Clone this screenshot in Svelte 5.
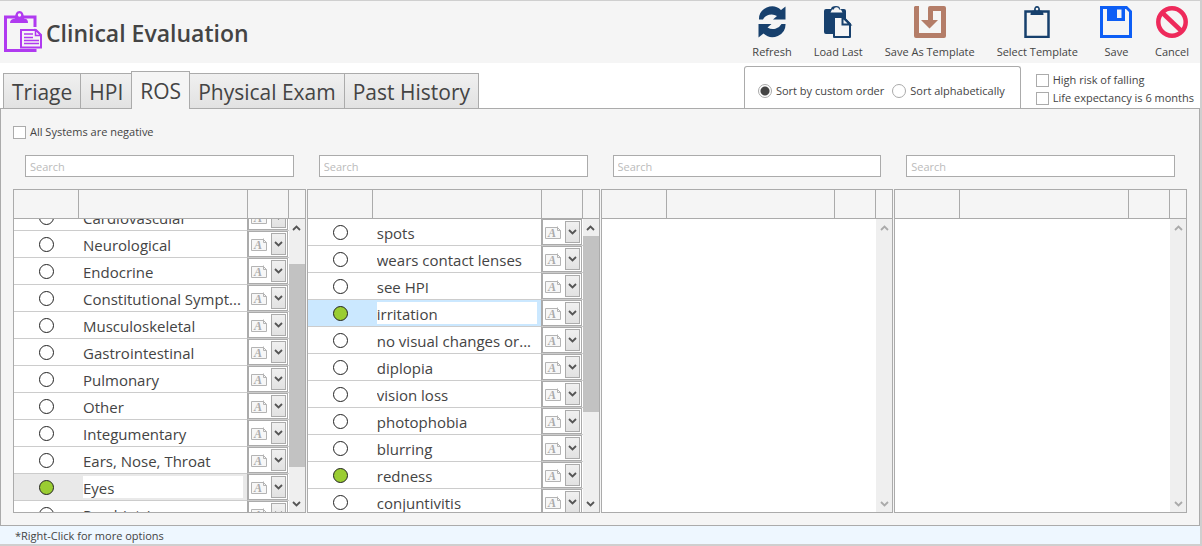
<script lang="ts">
	interface Row {
		name: string;
		checked?: boolean;
		selected?: boolean;
	}

	interface List {
		rows: Row[];
		// pixels scrolled past the top edge
		scroll: number;
		thumb?: { top: number; size: number };
		focused?: boolean;
	}

	const tools = [
		{ id: 'refresh', label: 'Refresh' },
		{ id: 'load', label: 'Load Last' },
		{ id: 'saveas', label: 'Save As Template' },
		{ id: 'select', label: 'Select Template' },
		{ id: 'save', label: 'Save' },
		{ id: 'cancel', label: 'Cancel' }
	];

	const tabs = ['Triage', 'HPI', 'ROS', 'Physical Exam', 'Past History'];

	let activeTab = $state('ROS');
	let sort = $state('custom');
	let allNegative = $state(false);
	let fallRisk = $state(false);
	let lifeExpectancy = $state(false);

	let lists: List[] = $state([
		{
			scroll: 15,
			thumb: { top: 11, size: 78 },
			rows: [
				{ name: 'Cardiovascular' },
				{ name: 'Neurological' },
				{ name: 'Endocrine' },
				{ name: 'Constitutional Sympt...' },
				{ name: 'Musculoskeletal' },
				{ name: 'Gastrointestinal' },
				{ name: 'Pulmonary' },
				{ name: 'Other' },
				{ name: 'Integumentary' },
				{ name: 'Ears, Nose, Throat' },
				{ name: 'Eyes', checked: true, selected: true },
				{ name: 'Psychiatric' }
			]
		},
		{
			scroll: 0,
			thumb: { top: 0, size: 68 },
			focused: true,
			rows: [
				{ name: 'spots' },
				{ name: 'wears contact lenses' },
				{ name: 'see HPI' },
				{ name: 'irritation', checked: true, selected: true },
				{ name: 'no visual changes or...' },
				{ name: 'diplopia' },
				{ name: 'vision loss' },
				{ name: 'photophobia' },
				{ name: 'blurring' },
				{ name: 'redness', checked: true },
				{ name: 'conjuntivitis' }
			]
		},
		{ scroll: 0, rows: [] },
		{ scroll: 0, rows: [] }
	]);
</script>

<div class="window">
	<header class="header">
		<svg class="logo" width="38" height="42" viewBox="0 0 38 42" fill="none">
			<path d="M31 16V6H1.5v33.500H31V38" stroke="#b03af0" stroke-width="3" />
			<path d="M6 12c0-3 2-4 5-4.500C11 3 12.500 0 15.500 0S20 3 20 7.500c3 .5 4 1.500 4 4.500z" fill="#b03af0" />
			<circle cx="15.500" cy="4" r="1.700" fill="#f5f5f5" />
			<path d="M17 19h15l5 5v12.500H17z" fill="#f5f5f5" stroke="#b03af0" stroke-width="2" />
			<path d="M31.500 19v5.500H37z" fill="#f5f5f5" stroke="#b03af0" stroke-width="1.500" />
			<path d="M20 23h9M20 26.500h9M20 29.500h15M20 32.500h15" stroke="#b03af0" stroke-width="1.700" />
		</svg>
		<h1>Clinical Evaluation</h1>

		<div class="toolbar">
			{#each tools as tool}
				<button class="tool">
					<svg width="32" height="32" viewBox="0 0 32 32" fill="none">
						{#if tool.id === 'refresh'}
							<path d="M3 13.500A13 12.500 0 0 1 25 4L29.500.5V13.500H17l4-3.500A9.500 8.500 0 0 0 7 13.500z" fill="#17406d" />
							<path d="M29.500 18A13 12.500 0 0 1 7.500 27.500L2.500 31.500V18H15.500l-4 3.500A9.500 8.500 0 0 0 25.500 18z" fill="#17406d" />
						{:else if tool.id === 'load'}
							<path d="M4 3h5c0-2 2-3 5-3s4 1 4 3h4a2 2 0 0 1 2 2v23H4a2 2 0 0 1-2-2V5a2 2 0 0 1 2-2z" fill="#17406d" />
							<path d="M8.500 6.500l1.500-3h2c0-3 5-3 5 0h2l1.500 3z" fill="#f5f5f5" />
							<path d="M12 11h9l7 7v13H12z" fill="#f5f5f5" stroke="#17406d" stroke-width="2" stroke-linejoin="round" />
							<path d="M20.500 11v7.500H28z" fill="#f5f5f5" stroke="#17406d" stroke-width="2" />
						{:else if tool.id === 'saveas'}
							<path d="M1 0h4v27h22V5h-8v9h5l-8.500 8.500L7 14h7V2a2 2 0 0 1 2-2h14a2 2 0 0 1 2 2v28a2 2 0 0 1-2 2H2a2 2 0 0 1-2-2V1z" fill="#b47d68" />
						{:else if tool.id === 'select'}
							<path d="M4.500 5.500h23V31h-23z" stroke="#17406d" stroke-width="2.500" />
							<path d="M9.500 9c0-3 1-4.500 3.500-4.500C13 1.500 14 0 16 0s3 1.500 3 4.500c2.500 0 3.500 1.500 3.500 4.500z" fill="#17406d" />
							<circle cx="16" cy="3" r="1.300" fill="#f5f5f5" />
						{:else if tool.id === 'save'}
							<path d="M0 0h27l5 5v27H0zM3 3v26h26V6l-3-3h-1v12H7V3z" fill="#0d5ef5" fill-rule="evenodd" />
							<path d="M7 2h18v13H7z" fill="#0d5ef5" />
							<path d="M17 3.500h4.500V12H17z" fill="#f5f5f5" />
						{:else}
							<circle cx="16" cy="16" r="13.700" stroke="#ee2a5b" stroke-width="4.500" />
							<path d="M6 6.500l20 19" stroke="#ee2a5b" stroke-width="4.500" />
						{/if}
					</svg>
					<span>{tool.label}</span>
				</button>
			{/each}
		</div>
	</header>

	<div class="strip">
		<nav class="tabs">
			{#each tabs as tab}
				<button class="tab" class:active={tab === activeTab} onclick={() => { activeTab = tab; }}>{tab}</button>
			{/each}
		</nav>

		<div class="sort">
			<label><input type="radio" name="sort" value="custom" bind:group={sort} />Sort by custom order</label>
			<label><input type="radio" name="sort" value="alpha" bind:group={sort} />Sort alphabetically</label>
		</div>

		<div class="flags">
			<label><input type="checkbox" class="box" bind:checked={fallRisk} />High risk of falling</label>
			<label><input type="checkbox" class="box" bind:checked={lifeExpectancy} />Life expectancy is 6 months</label>
		</div>
	</div>

	<main class="panel">
		<label class="all"><input type="checkbox" class="box" bind:checked={allNegative} />All Systems are negative</label>

		<div class="lists">
			{#each lists as list}
				<section class="column">
					<input class="search" type="text" placeholder="Search" aria-label="Search" />
					<div class="list" class:focused={list.focused}>
						<table>
							<thead>
								<tr><th></th><th></th><th></th></tr>
							</thead>
							<tbody>
								{#each list.rows as row, i}
									<tr class:selected={row.selected} style:margin-top={i === 0 ? `${-list.scroll}px` : null}>
										<td class="mark"><input type="checkbox" aria-label={row.name} bind:checked={row.checked} /></td>
										<td class="name"><span>{row.name}</span></td>
										<td class="note">
											<button class="combo" aria-label="Note for {row.name}">
												<svg width="16" height="13" viewBox="0 0 16 13" fill="none">
													<path d="M.5 1.500h12l3 3v8H.5z" fill="#f7f7f7" stroke="#b4b4b4" />
													<path d="M12.500.5v4h3" stroke="#b4b4b4" />
													<text x="3" y="11">A</text>
												</svg>
												<span class="drop">
													<svg width="9" height="6" viewBox="0 0 9 6" fill="none">
														<path d="M1 1l3.500 3.500L8 1" stroke="#555" stroke-width="1.800" />
													</svg>
												</span>
											</button>
										</td>
									</tr>
								{/each}
							</tbody>
						</table>
						<div class="scrollbar" class:idle={!list.thumb}>
							<div class="corner"></div>
							<button aria-label="Scroll up">
								<svg width="9" height="6" viewBox="0 0 9 6" fill="none">
									<path d="M1 5l3.500-3.500L8 5" stroke="currentColor" stroke-width="1.800" />
								</svg>
							</button>
							<div class="track">
								{#if list.thumb}
									<div class="thumb" style:top="{list.thumb.top}%" style:height="{list.thumb.size}%"></div>
								{/if}
							</div>
							<button aria-label="Scroll down">
								<svg width="9" height="6" viewBox="0 0 9 6" fill="none">
									<path d="M1 1l3.500 3.500L8 1" stroke="currentColor" stroke-width="1.800" />
								</svg>
							</button>
						</div>
					</div>
				</section>
			{/each}
		</div>
	</main>

	<footer class="hint">*Right-Click for more options</footer>
</div>

<style>
	:global(body) { margin: 0; }

	.window {
		--line: #ababab;
		--bg: #f5f5f5;
		box-sizing: border-box;
		height: 100vh;
		min-height: 400px;
		display: flex;
		flex-direction: column;
		border: solid #cfcfcf;
		border-width: 1px 2px 2px 0;
		background: #fff;
		color: #444;
		font-family: "Segoe UI", "Open Sans", sans-serif;
		font-size: 11px;
		line-height: 16px;
	}
	.window * { box-sizing: border-box; }

	button, input {
		font: inherit;
		color: inherit;
		margin: 0;
		padding: 0;
	}
	button {
		border: none;
		background: none;
	}
	svg { display: block; flex: none; }

	.header {
		display: flex;
		align-items: center;
		height: 62px;
		flex: none;
		padding: 0 11px 0 4px;
		background: var(--bg);
	}
	h1 {
		flex: 1;
		margin: 0 0 0 4px;
		padding-top: 2px;
		font-size: 23px;
		font-weight: 600;
		line-height: 32px;
		white-space: nowrap;
	}
	.toolbar {
		display: flex;
		gap: 22px;
		padding-top: 1px;
	}
	.tool {
		display: flex;
		flex-direction: column;
		align-items: center;
		gap: 6px;
		min-width: 33px;
		white-space: nowrap;
	}

	.strip {
		display: flex;
		align-items: flex-end;
		flex: none;
		height: 45px;
	}
	.tabs {
		flex: 1;
		display: flex;
		align-items: flex-end;
		margin-bottom: -1px;
		padding-left: 3px;
	}
	.tab {
		height: 36px;
		padding: 0 8px;
		border: 1px solid var(--line);
		background: linear-gradient(#f0f0f0, #e2e2e2);
		font-size: 21px;
		line-height: 36px;
		white-space: nowrap;
	}
	.tab + .tab { margin-left: -1px; }
	.tab.active {
		position: relative;
		height: 38px;
		border-bottom: none;
		background: var(--bg);
	}

	label {
		display: flex;
		align-items: center;
		gap: 4px;
		white-space: nowrap;
	}
	.sort {
		display: flex;
		align-items: center;
		gap: 8px;
		height: 42px;
		padding: 6px 15px 0 13px;
		border: 1px solid var(--line);
		border-bottom: none;
		border-radius: 3px 3px 0 0;
	}
	.sort input {
		appearance: none;
		width: 14px;
		height: 14px;
		border: 1px solid #aaa;
		border-radius: 50%;
		background: #fff;
	}
	.sort input:checked { background: radial-gradient(circle, #444 4px, #fff 5px); }
	.flags {
		display: flex;
		flex-direction: column;
		gap: 2px;
		padding: 0 6px 2px 15px;
	}
	.box {
		appearance: none;
		width: 13px;
		height: 13px;
		border: 1px solid var(--line);
		background: #fff;
	}
	.box:checked { background: #444; }

	.panel {
		flex: 1;
		min-height: 0;
		display: flex;
		flex-direction: column;
		padding: 15px 12px 12px;
		border: 1px solid var(--line);
		background: var(--bg);
	}
	.lists {
		flex: 1;
		min-height: 0;
		display: grid;
		grid-template-columns: repeat(4, minmax(0, 1fr));
		gap: 1px;
		margin-top: 15px;
	}
	.column {
		display: flex;
		flex-direction: column;
		min-height: 0;
	}
	.search {
		flex: none;
		height: 22px;
		margin: 0 12px 12px;
		padding: 0 4px;
		border: 1px solid var(--line);
		background: #fff;
	}
	.search::placeholder { color: #bbb; }

	.list {
		flex: 1;
		min-height: 0;
		display: grid;
		grid-template-columns: minmax(0, 1fr) 16px;
		border: 1px solid var(--line);
		background: #fff;
	}
	table {
		display: flex;
		flex-direction: column;
		min-height: 0;
	}
	thead { flex: none; }
	thead, tbody { display: block; }
	tbody {
		flex: 1;
		min-height: 0;
		overflow: hidden;
	}
	tr {
		display: grid;
		grid-template-columns: 65px minmax(0, 1fr) 41px;
	}
	th, td { padding: 0; }
	th, .corner {
		height: 29px;
		border-bottom: 1px solid var(--line);
		background: var(--bg);
	}
	th { border-right: 1px solid var(--line); }
	td {
		height: 27px;
		border-bottom: 1px solid #ccc;
	}

	.mark {
		display: flex;
		align-items: center;
		justify-content: center;
	}
	.mark input {
		appearance: none;
		width: 15px;
		height: 15px;
		border: 1px solid #222;
		border-radius: 50%;
		background: #fff;
	}
	.mark input:checked { background: #9acd32; }
	.name {
		padding: 2px 4px;
		border-right: 1px solid var(--line);
	}
	.name span {
		display: block;
		height: 22px;
		overflow: hidden;
		font-size: 15px;
		line-height: 24px;
		white-space: nowrap;
		text-overflow: ellipsis;
	}
	.selected .mark, .selected .name { background: #e9e9e9; }
	.focused .selected .mark, .focused .selected .name { background: #cbe8ff; }
	.selected .name span { background: #fff; }

	.note { padding-right: 1px; }
	.combo {
		display: flex;
		align-items: center;
		justify-content: space-between;
		width: 100%;
		height: 26px;
		padding: 0 1px 0 2px;
		border: 1px solid var(--line);
		background: #fff;
	}
	.combo text {
		fill: #aaa;
		font: italic bold 12px "Liberation Serif", serif;
	}
	.drop {
		display: flex;
		align-items: center;
		justify-content: center;
		width: 15px;
		height: 22px;
		border: 1px solid var(--line);
		background: linear-gradient(#f0f0f0, #e2e2e2);
	}

	.scrollbar {
		display: flex;
		flex-direction: column;
		min-height: 0;
		background: #efefef;
		color: #555;
	}
	.scrollbar.idle { color: #aaa; }
	.scrollbar button {
		display: flex;
		align-items: center;
		justify-content: center;
		flex: none;
		height: 17px;
	}
	.track {
		position: relative;
		flex: 1;
	}
	.thumb {
		position: absolute;
		left: 0;
		right: 0;
		background: #c2c2c2;
	}

	.hint {
		flex: none;
		height: 18px;
		padding: 2px 15px 0;
		background: #eef7ff;
	}
</style>
